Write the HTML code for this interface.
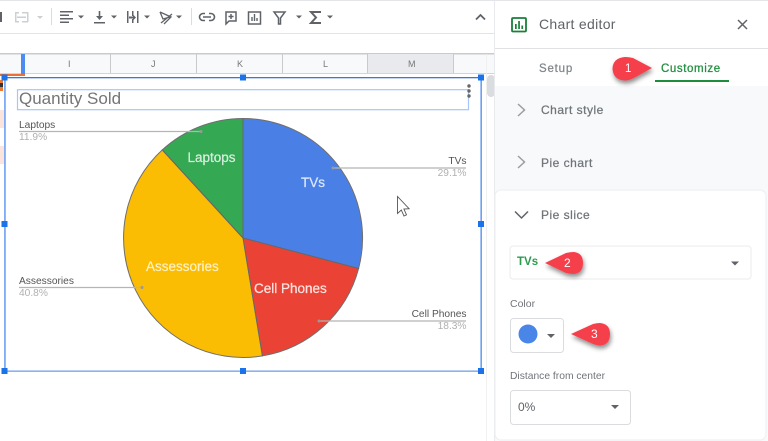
<!DOCTYPE html>
<html><head><meta charset="utf-8"><style>
html,body{margin:0;padding:0;background:#fff}
body{width:768px;height:441px;overflow:hidden;position:relative;font-family:"Liberation Sans",sans-serif}
#w{position:absolute;left:0;top:0;width:768px;height:441px;overflow:hidden;background:#fff;filter:blur(.35px)}
.a{position:absolute;white-space:nowrap}
.m{-webkit-text-stroke:.25px currentColor}
svg{position:absolute;left:0;top:0}
</style></head><body><div id="w">
<svg width="768" height="441" viewBox="0 0 768 441">
<!-- top strip and toolbar borders -->
<rect x="0" y="0" width="768" height="1" fill="#e4e5e8"/>
<rect x="0" y="33" width="495" height="1" fill="#e2e3e5"/>
<!-- header row -->
<rect x="0" y="53" width="495" height="21" fill="#f8f9fa"/>
<rect x="0" y="53" width="495" height="1.5" fill="#c8cacc"/>
<rect x="0" y="73" width="495" height="1" fill="#d4d5d7"/>
<rect x="368" y="54" width="85" height="19" fill="#e8eaed"/>
<g fill="#c8cacc"><rect x="110" y="54" width="1" height="19"/><rect x="196" y="54" width="1" height="19"/><rect x="282" y="54" width="1" height="19"/><rect x="367" y="54" width="1" height="19"/><rect x="453" y="54" width="1" height="19"/></g>
<rect x="21" y="54" width="4" height="21" fill="#4d8bf0"/>
<rect x="0" y="74" width="25" height="2" fill="#e8703a"/>
<rect x="0" y="80" width="3" height="11" fill="#ee7a30"/>
<rect x="0" y="83" width="3" height="4" fill="#333"/>
<rect x="0" y="110" width="4" height="18" fill="#fce4dc"/>
<rect x="0" y="146" width="4" height="18" fill="#fce4dc"/>
<!-- toolbar icons -->
<g fill="#5f6368">
<rect x="0" y="12" width="2" height="10"/>
<g opacity=".3"><rect x="15" y="12" width="4" height="1.5"/><rect x="22" y="12" width="6" height="1.5"/><rect x="15" y="21" width="4" height="1.5"/><rect x="22" y="21" width="6" height="1.5"/><rect x="15" y="12" width="1.5" height="10"/><rect x="27" y="12" width="1.5" height="10"/><rect x="17" y="16.5" width="9" height="1.5"/><path d="M37 16h6l-3 3z"/></g>
<rect x="51" y="8" width="1" height="17" fill="#dadce0"/>
<rect x="60" y="11" width="13" height="1.5"/><rect x="60" y="14.5" width="9" height="1.5"/><rect x="60" y="18" width="13" height="1.5"/><rect x="60" y="21.5" width="9" height="1.5"/>
<path d="M78 15.5h6l-3 3z"/>
<rect x="94" y="22" width="11" height="1.5"/><rect x="98.7" y="11" width="1.6" height="7"/><path d="M96 16h7l-3.5 4z"/>
<path d="M111 15.5h6l-3 3z"/>
<rect x="127" y="11" width="1.5" height="12"/><rect x="137" y="11" width="1.5" height="12"/><rect x="132" y="11" width="1.5" height="5"/><rect x="132" y="19" width="1.5" height="4"/><path d="M129 16.5h4v-2l3 3-3 3v-2h-4z"/>
<path d="M144 15.5h6l-3 3z"/>
<path d="M176 15.5h6l-3 3z"/>
<rect x="191" y="8" width="1" height="17" fill="#dadce0"/>
<path d="M296 15.5h6l-3 3z"/>
<path d="M327 15.5h6l-3 3z"/>
</g>
<g fill="none" stroke="#5f6368" stroke-width="1.5">
<path d="M160 12l11 5-7 7M160 12l3 7 7-2M172 14l-11 9" stroke-width="1.3"/>
<path d="M205 13.500h-2a3.500 3.500 0 0 0 0 7h2M209 13.500h2a3.500 3.500 0 0 1 0 7h-2M203 17h8" stroke-width="1.600"/>
<path d="M226 12h10v9h-7l-3 3z"/><path d="M231 14v5M228.500 16.500h5"/>
<rect x="248.500" y="12" width="12" height="12"/><path d="M252 21v-4M254.500 21v-7M257 21v-3" stroke-width="1.4"/>
<path d="M274 12h11l-4.500 6v6h-2v-6z"/>
<path d="M322 12h-10l5 5.500-5 5.500h10" stroke-width="2" transform="translate(-1 0)"/>
<path d="M476 19.500l4.500-4.500 4.500 4.500" stroke-width="1.8"/>
</g>
<!-- pie -->
<g stroke="#6f6f6f" stroke-width="1">
<path d="M243 238V118.500A119.500 119.500 0 0 1 358.600 268.500Z" fill="#4a80e6"/>
<path d="M243 238L358.600 268.500A119.500 119.500 0 0 1 262.400 355.900Z" fill="#ea4335"/>
<path d="M243 238L262.400 355.900A119.500 119.500 0 0 1 162.300 149.900Z" fill="#fbbc04"/>
<path d="M243 238L162.300 149.900A119.500 119.500 0 0 1 243 118.500Z" fill="#34a853"/>
</g>
<path d="M243 118.500V238L358.600 268.500M243 238L262.400 355.900M243 238L162.300 149.900" fill="none" stroke="#666" stroke-width=".8"/>
<!-- leader lines -->
<g stroke="#b5b5b5" stroke-width="1.2" fill="none">
<path d="M19 131.500H201"/><path d="M19 287.500H142"/><path d="M333 168H466"/><path d="M319 321H466"/>
</g>
<g fill="#999"><circle cx="201" cy="131.500" r="1.500"/><circle cx="142" cy="287.500" r="1.500"/><circle cx="333" cy="168" r="1.500"/><circle cx="319" cy="321" r="1.500"/></g>
<!-- title box -->
<rect x="17.500" y="89.700" width="451" height="20" fill="none" stroke="#a6c6f7" stroke-width="1.200"/>
<g fill="#666"><circle cx="469" cy="86" r="1.700"/><circle cx="469" cy="91" r="1.700"/><circle cx="469" cy="96" r="1.700"/></g>
<!-- selection -->
<rect x="4.500" y="77" width="477" height="1.300" fill="#3a78d8"/>
<rect x="4.500" y="370.500" width="477" height="1.300" fill="#6f9fe6"/>
<rect x="4.300" y="77" width="1.300" height="294" fill="#4a8af0"/>
<rect x="480.500" y="77" width="1.300" height="294" fill="#4a8af0"/>
<g fill="#1a73e8">
<rect x="1.500" y="74.500" width="6" height="6"/><rect x="240" y="74.500" width="6" height="6"/><rect x="478" y="74.500" width="6" height="6"/>
<rect x="1.500" y="221" width="6" height="6"/><rect x="478" y="221" width="6" height="6"/>
<rect x="1.500" y="368" width="6" height="6"/><rect x="240" y="368" width="6" height="6"/><rect x="478" y="368" width="6" height="6"/>
</g>
<!-- sheet scrollbar -->
<rect x="486" y="74" width="9" height="320" fill="#fff"/>
<rect x="486" y="54" width="1" height="390" fill="#f0f0f0"/>
<rect x="487" y="75" width="8" height="22" rx="4" fill="#dadce0"/>
<!-- cursor -->
<path d="M397.500 196.500v17l3.800-3.500 2.700 6 2.500-1.200-2.600-5.800 5.200-.3z" fill="#fff" stroke="#555" stroke-width=".9"/>
<!-- panel -->
<rect x="495" y="1" width="273" height="440" fill="#fff"/>
<rect x="494" y="1" width="1" height="440" fill="#e8eaed"/>
<rect x="495" y="48" width="273" height="1" fill="#e0e1e4"/>
<rect x="495" y="86" width="273" height="355" fill="#f8f9fa"/>
<rect x="495" y="190" width="271" height="250" rx="6" fill="#fff" stroke="#eceef0" stroke-width="1"/>
<rect x="655" y="80" width="74" height="2" fill="#1e8e3e"/>
<!-- chart editor icon -->
<rect x="512" y="18" width="14" height="13.500" rx="1" fill="none" stroke="#188038" stroke-width="1.800"/>
<g fill="#188038"><rect x="515" y="24" width="1.700" height="5"/><rect x="518.200" y="21" width="1.700" height="8"/><rect x="521.400" y="25.500" width="1.700" height="3.500"/></g>
<path d="M738 20l9 9M747 20l-9 9" stroke="#5f6368" stroke-width="1.500" fill="none"/>
<!-- chevrons -->
<g fill="none" stroke="#9a9da1" stroke-width="1.500"><path d="M518 104l6.500 6-6.500 6"/><path d="M518 156l6.500 6-6.500 6"/></g>
<path d="M515 211.500l6.500 6.500 6.500-6.500" fill="none" stroke="#5f6368" stroke-width="1.500"/>
<!-- dropdowns -->
<rect x="510" y="246" width="241" height="33" rx="3" fill="#fff" stroke="#ebebeb"/>
<rect x="510.500" y="318.500" width="53" height="34" rx="3" fill="#fff" stroke="#dadce0"/>
<circle cx="528" cy="334" r="9.500" fill="#4a86e8"/>
<rect x="510.500" y="390.500" width="120" height="34" rx="3" fill="#fff" stroke="#dadce0"/>
<g fill="#5f6368"><path d="M731 261.500h8l-4 4z"/><path d="M547 334h8l-4 4z"/><path d="M611 405h8l-4 4z"/></g>
<!-- callouts -->
<defs><filter id="s" x="-30%" y="-50%" width="160%" height="200%"><feDropShadow dx="1" dy="3" stdDeviation="2.500" flood-color="#000" flood-opacity=".45"/></filter></defs>
<g fill="#f5404c" filter="url(#s)">
<path d="M652 68L633 58Q629 57 625 57Q613 58 612.500 68.500Q613 80 625 80.500Q629 80.500 633 78.500Z"/>
<path d="M545 263L566 253Q570 252 574 252Q583 253 583 263Q583 273 574 274Q570 274 566 273Z"/>
<path d="M571 334L593 324Q597 323 600 323Q610 324 610 334Q610 345 600 345.500Q597 345.500 593 344Z"/>
</g>
</svg>
<div class="a" style="left:19px;top:89px;font-size:17px;line-height:20px;color:#757575">Quantity Sold</div>
<div class="a" style="left:19px;top:119.500px;font-size:10.200px;line-height:12px;color:#555">Laptops</div>
<div class="a" style="left:19px;top:132px;font-size:10.200px;line-height:12px;color:#b0b0b0">11.9%</div>
<div class="a" style="left:19px;top:275.500px;font-size:10.200px;line-height:12px;color:#555">Assessories</div>
<div class="a" style="left:19px;top:287.500px;font-size:10.200px;line-height:12px;color:#b0b0b0">40.8%</div>
<div class="a" style="right:301.500px;top:155.500px;font-size:10.200px;line-height:12px;color:#555">TVs</div>
<div class="a" style="right:301.500px;top:168px;font-size:10.200px;line-height:12px;color:#b0b0b0">29.1%</div>
<div class="a" style="right:301.500px;top:308.500px;font-size:10.200px;line-height:12px;color:#555">Cell Phones</div>
<div class="a" style="right:301.500px;top:321px;font-size:10.200px;line-height:12px;color:#b0b0b0">18.3%</div>
<div class="a m" style="left:187.500px;top:150px;font-size:13.500px;line-height:15px;color:#d6eedd">Laptops</div>
<div class="a m" style="left:301px;top:175px;font-size:13.500px;line-height:15px;color:#dbe6fa">TVs</div>
<div class="a m" style="left:146px;top:259px;font-size:13.500px;line-height:15px;color:#fff0c0">Assessories</div>
<div class="a m" style="left:254px;top:281px;font-size:13.500px;line-height:15px;color:#fde3e0">Cell Phones</div>
<div class="a" style="left:68px;top:59px;font-size:9px;line-height:11px;color:#777">I</div>
<div class="a" style="left:151px;top:59px;font-size:9px;line-height:11px;color:#777">J</div>
<div class="a" style="left:237px;top:59px;font-size:9px;line-height:11px;color:#777">K</div>
<div class="a" style="left:323px;top:59px;font-size:9px;line-height:11px;color:#777">L</div>
<div class="a" style="left:408px;top:59px;font-size:9px;line-height:11px;color:#777">M</div>
<div class="a" style="left:539px;top:16px;font-size:14px;line-height:17px;letter-spacing:.3px;color:#5f6368">Chart editor</div>
<div class="a m" style="left:539px;top:62px;font-size:11.500px;line-height:14px;letter-spacing:.8px;color:#80868b">Setup</div>
<div class="a m" style="left:661px;top:62px;font-size:11.500px;line-height:14px;letter-spacing:.6px;color:#1e8e3e">Customize</div>
<div class="a m" style="left:541px;top:103px;font-size:12px;line-height:14px;letter-spacing:.5px;color:#70757a">Chart style</div>
<div class="a m" style="left:541px;top:155.500px;font-size:12px;line-height:14px;letter-spacing:.5px;color:#70757a">Pie chart</div>
<div class="a m" style="left:541px;top:207.500px;font-size:12px;line-height:14px;letter-spacing:.5px;color:#70757a">Pie slice</div>
<div class="a" style="left:517px;top:255px;font-size:11.500px;line-height:14px;font-weight:bold;color:#2e9a50">TVs</div>
<div class="a" style="left:510px;top:298px;font-size:10.500px;line-height:13px;color:#70757a">Color</div>
<div class="a" style="left:510px;top:370px;font-size:10.300px;line-height:13px;color:#70757a">Distance from center</div>
<div class="a" style="left:518px;top:400px;font-size:12px;line-height:14px;color:#5f6368">0%</div>
<div class="a" style="left:625px;top:62px;font-size:11.500px;line-height:14px;color:#fff">1</div>
<div class="a" style="left:564px;top:256px;font-size:12px;line-height:14px;color:#fff">2</div>
<div class="a" style="left:591px;top:327px;font-size:12px;line-height:14px;color:#fff">3</div>
</div></body></html>
